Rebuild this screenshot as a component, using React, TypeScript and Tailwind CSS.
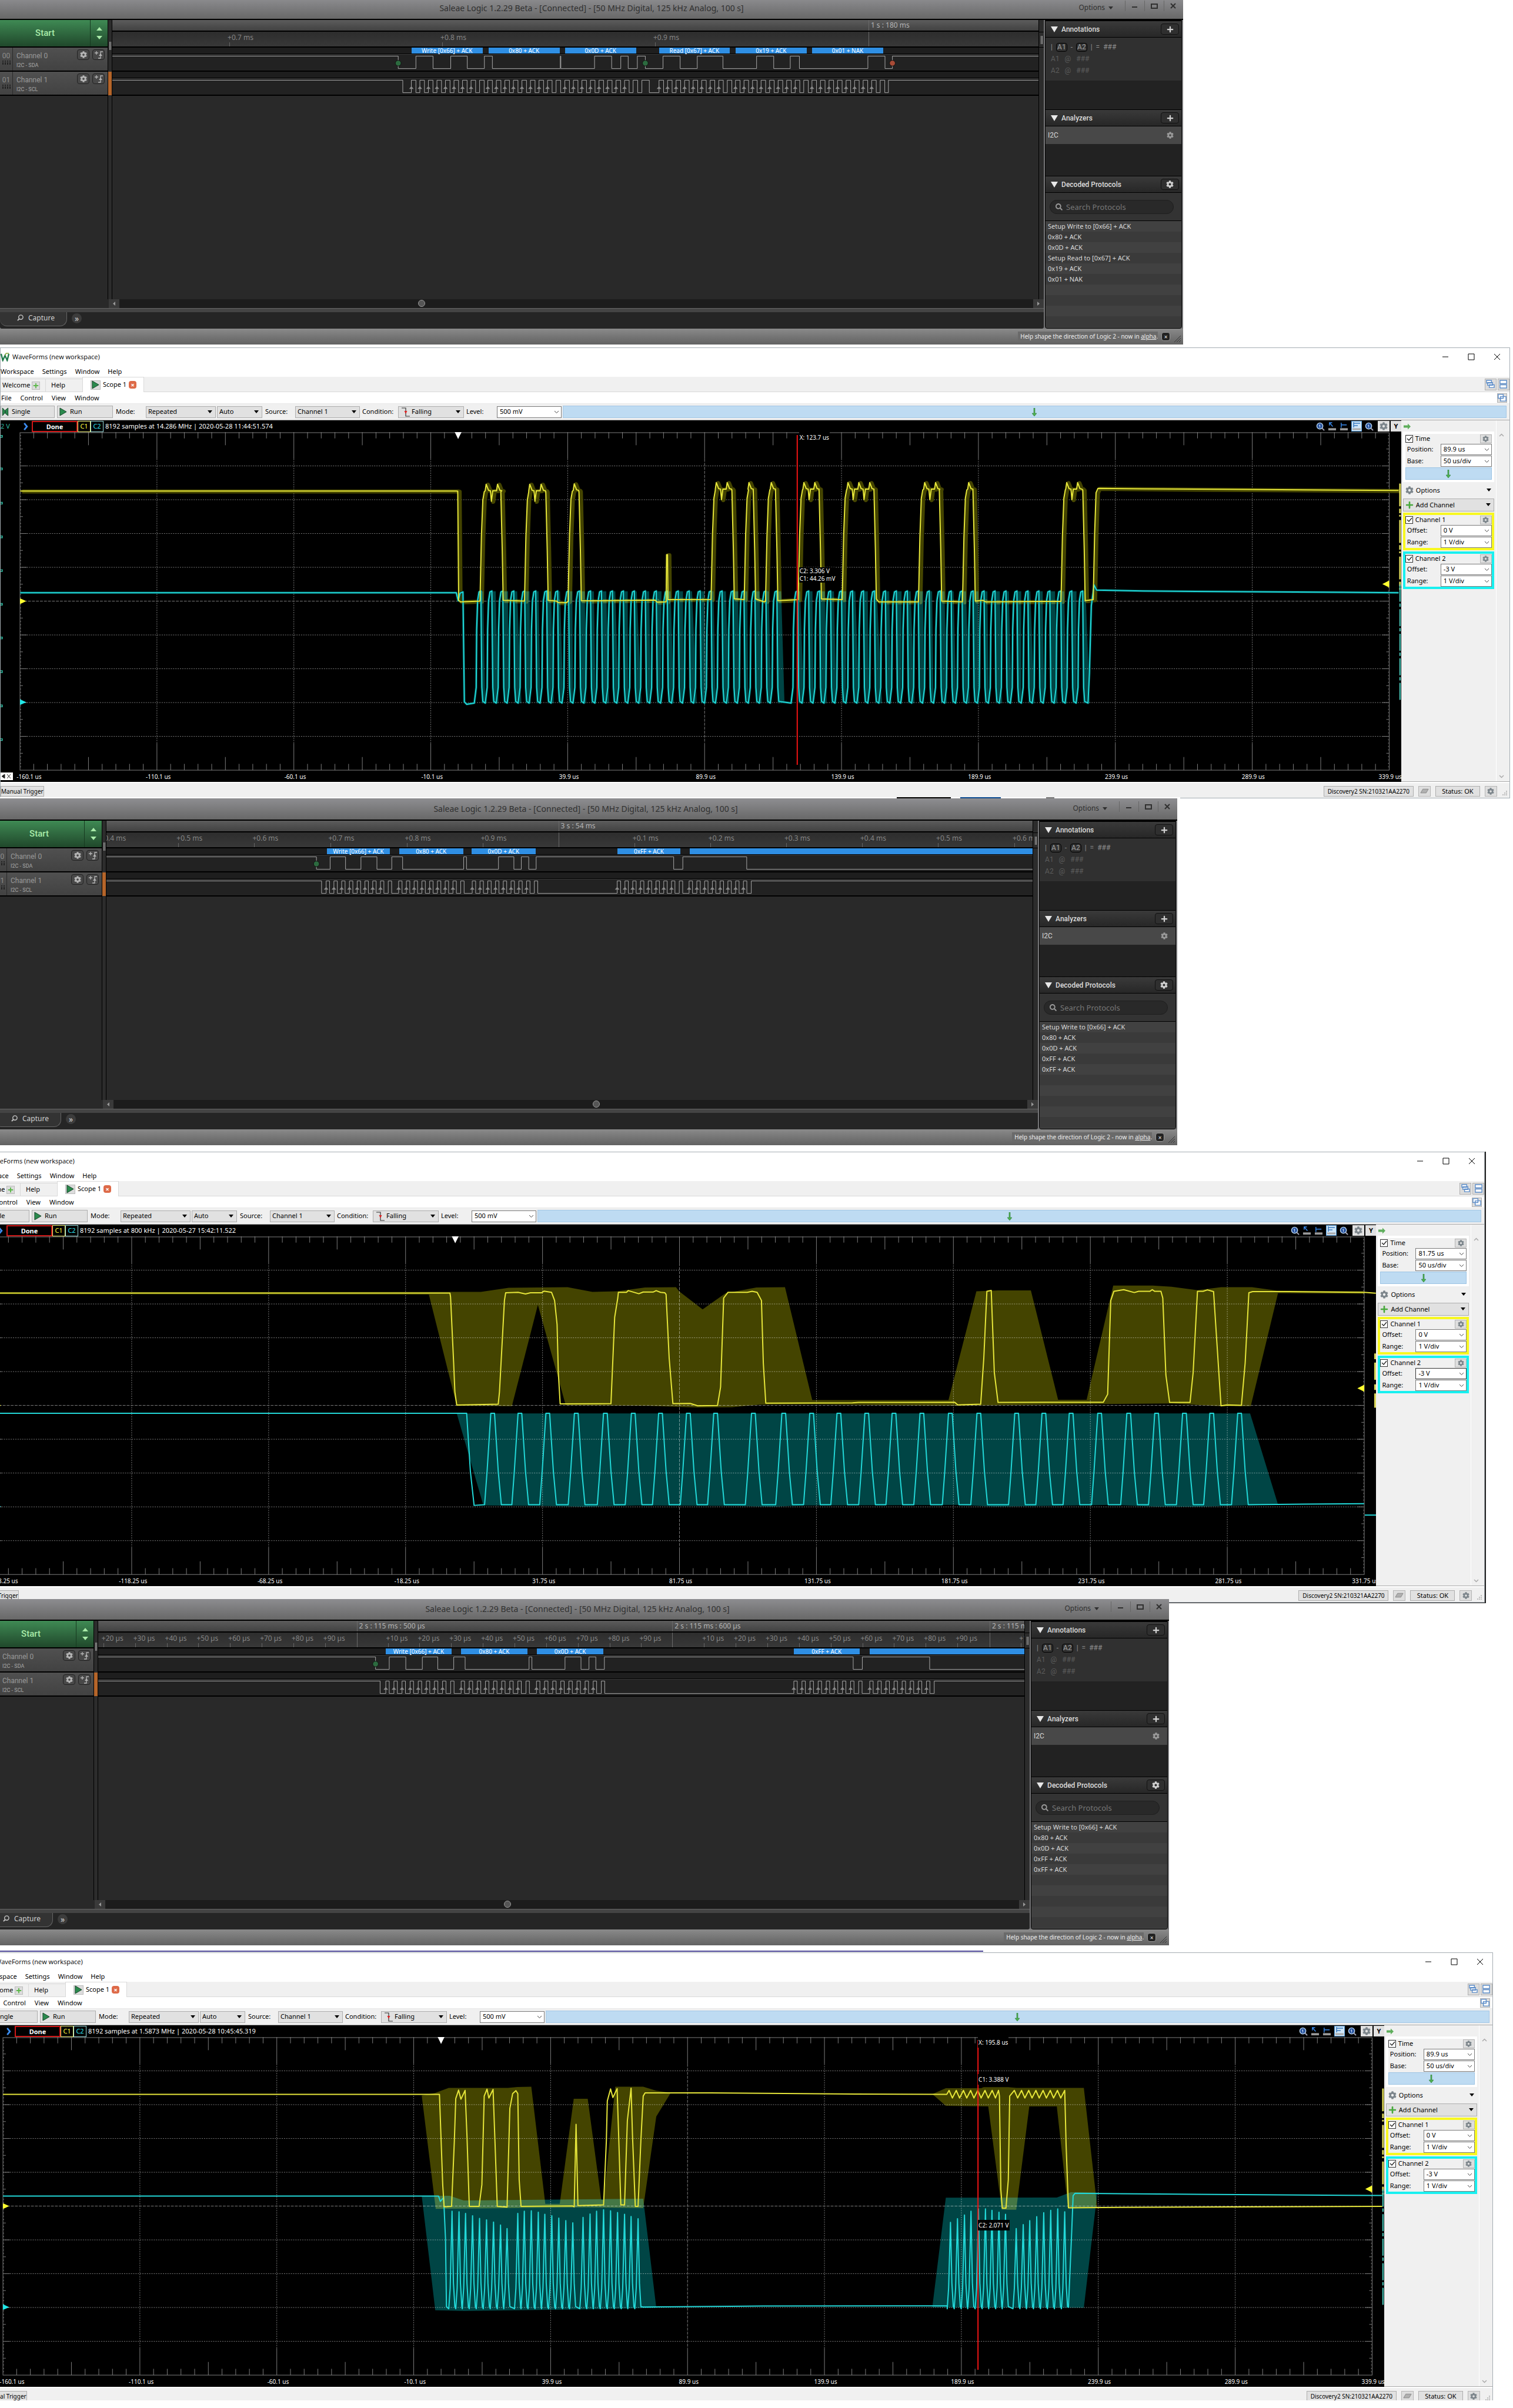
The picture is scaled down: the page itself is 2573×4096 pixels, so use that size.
import React from 'react';
import { FaCog, FaPlus, FaSearch } from 'react-icons/fa';

/* ---------- shared drawing helpers ---------- */

// converts an x position on the logic timeline into a percentage of its width
const LANE_X = 196;
const LANE_W = 1623;
const pct = (x: number) => `${((x - LANE_X) / LANE_W) * 100}%`;

// square wave that starts high and toggles on every edge
const squareWave = (edges: number[]) => {
  let high = true;
  let d = `M${LANE_X} 2.5`;
  edges.forEach((x) => {
    d += `H${x}`;
    high = !high;
    d += `V${high ? 2.5 : 24.5}`;
  });
  return `${d}H${LANE_X + LANE_W}`;
};

interface ByteClock {
  x: number;
  period: number;
  width: number;
}

const clockEdges = ({ x, period, width }: ByteClock) =>
  Array.from({ length: 9 }).flatMap((_, i) => [x + i * period, x + i * period + width]);

/* ---------- Logic analyzer ---------- */

interface Tick {
  x: number;
  label: string;
}

interface Frame {
  from: number;
  to: number;
  label: string;
}

interface LogicCapture {
  id: string;
  majors: Tick[];
  minors: Tick[];
  frames: Frame[];
  sda: number[];
  starts: number[];
  stop?: number;
  sclEdges: number[];
  bytes: ByteClock[];
  decoded: string[];
  scroll: number;
}

const byteRow = (xs: number[], period: number, width: number): ByteClock[] =>
  xs.map((x) => ({ x, period, width }));

const bytesA = byteRow([720, 854, 989, 1154, 1288, 1422], 14.95, 8);
const bytesB = byteRow([581, 708, 837, 1091, 1217], 13.6, 6);
const bytesC = byteRow([700, 832, 964, 1415, 1548], 14.2, 6);

const captures: LogicCapture[] = [
  {
    id: 'a',
    majors: [{ x: 1521, label: '1 s : 180 ms' }],
    minors: [
      { x: 401, label: '+0.7 ms' },
      { x: 774, label: '+0.8 ms' },
      { x: 1147, label: '+0.9 ms' },
    ],
    frames: [
      { from: 720, to: 845, label: 'Write [0x66] + ACK' },
      { from: 855, to: 980, label: '0x80 + ACK' },
      { from: 989, to: 1114, label: '0x0D + ACK' },
      { from: 1154, to: 1278, label: 'Read [0x67] + ACK' },
      { from: 1288, to: 1413, label: '0x19 + ACK' },
      { from: 1422, to: 1547, label: '0x01 + NAK' },
    ],
    sda: [697, 728, 758, 789, 818, 848, 862, 981, 982, 1041, 1071, 1087, 1100, 1116, 1130, 1161, 1191, 1221, 1266, 1325, 1355, 1384, 1400, 1520, 1550, 1563],
    starts: [697, 1130],
    stop: 1563,
    sclEdges: [705, ...bytesA.slice(0, 3).flatMap(clockEdges), 1124, 1137, ...bytesA.slice(3).flatMap(clockEdges), 1556],
    bytes: bytesA,
    decoded: ['Setup Write to [0x66] + ACK', '0x80 + ACK', '0x0D + ACK', 'Setup Read to [0x67] + ACK', '0x19 + ACK', '0x01 + NAK'],
    scroll: 733,
  },
  {
    id: 'b',
    majors: [{ x: 988, label: '3 s : 54 ms' }],
    minors: [
      { x: 188, label: '+0.4 ms' },
      { x: 322, label: '+0.5 ms' },
      { x: 455, label: '+0.6 ms' },
      { x: 588, label: '+0.7 ms' },
      { x: 722, label: '+0.8 ms' },
      { x: 855, label: '+0.9 ms' },
      { x: 1121, label: '+0.1 ms' },
      { x: 1254, label: '+0.2 ms' },
      { x: 1387, label: '+0.3 ms' },
      { x: 1520, label: '+0.4 ms' },
      { x: 1653, label: '+0.5 ms' },
      { x: 1787, label: '+0.6 ms' },
    ],
    frames: [
      { from: 582, to: 693, label: 'Write [0x66] + ACK' },
      { from: 709, to: 821, label: '0x80 + ACK' },
      { from: 836, to: 948, label: '0x0D + ACK' },
      { from: 1091, to: 1202, label: '0xFF + ACK' },
      { from: 1218, to: 1819, label: '' },
    ],
    sda: [564, 588, 615, 642, 670, 696, 715, 822, 827, 883, 910, 923, 936, 949, 1190, 1206, 1318],
    starts: [564],
    sclEdges: [573, ...bytesB.flatMap(clockEdges).slice(0, -2), 1326],
    bytes: bytesB,
    decoded: ['Setup Write to [0x66] + ACK', '0x80 + ACK', '0x0D + ACK', '0xFF + ACK', '0xFF + ACK'],
    scroll: 1053,
  },
  {
    id: 'c',
    majors: [
      { x: 649, label: '2 s : 115 ms : 500 µs' },
      { x: 1202, label: '2 s : 115 ms : 600 µs' },
      { x: 1758, label: '2 s : 115 ms : 700 µs' },
    ],
    minors: [
      ...[20, 30, 40, 50, 60, 70, 80, 90].map((t) => ({ x: 94 + t * 5.55, label: `+${t} µs` })),
      ...[10, 20, 30, 40, 50, 60, 70, 80, 90].map((t) => ({ x: 648 + t * 5.55, label: `+${t} µs` })),
      ...[10, 20, 30, 40, 50, 60, 70, 80, 90].map((t) => ({ x: 1202 + t * 5.55, label: `+${t} µs` })),
      { x: 1813, label: '+10 µs' },
    ],
    frames: [
      { from: 700, to: 815, label: 'Write [0x66] + ACK' },
      { from: 832, to: 948, label: '0x80 + ACK' },
      { from: 965, to: 1081, label: '0x0D + ACK' },
      { from: 1415, to: 1530, label: '0xFF + ACK' },
      { from: 1548, to: 1819, label: '' },
    ],
    sda: [682, 706, 735, 764, 791, 819, 839, 951, 956, 1014, 1042, 1056, 1068, 1083, 1519, 1535, 1653],
    starts: [682],
    sclEdges: [690, ...bytesC.flatMap(clockEdges).slice(0, -2), 1661],
    bytes: bytesC,
    decoded: ['Setup Write to [0x66] + ACK', '0x80 + ACK', '0x0D + ACK', '0xFF + ACK', '0xFF + ACK'],
    scroll: 910,
  },
];

const Lane: React.FC<{ edges: number[]; bytes?: ByteClock[]; starts?: number[]; stop?: number }> = ({
  edges,
  bytes = [],
  starts = [],
  stop,
}) => (
  <svg
    viewBox={`${LANE_X} 0 ${LANE_W} 28`}
    preserveAspectRatio="none"
    className="block h-[28px] w-full border-t border-[#3a3a3a] bg-[#222]"
  >
    <path d={squareWave(edges)} fill="none" stroke="#a9a9a9" strokeWidth="1" vectorEffect="non-scaling-stroke" />
    {bytes.flatMap((b) =>
      Array.from({ length: 8 }).map((_, i) => {
        const x = b.x + i * b.period;
        return <path key={x} d={`M${x - 4} 18L${x} 13L${x + 4} 18Z`} fill="#8a8a8a" />;
      }),
    )}
    {starts.map((x) => (
      <circle key={x} cx={x} cy="15" r="5" fill="#2c6a3f" stroke="#101010" />
    ))}
    {stop && <circle cx={stop} cy="15" r="5" fill="#a84b36" stroke="#101010" />}
  </svg>
);

const Glyph: React.FC = () => (
  <svg viewBox="0 0 18 16" className="h-[16px] w-[18px]">
    <path d="M2 5h6M5 2v6M8 14h4V3h4" fill="none" stroke="#b5b5b5" strokeWidth="1.3" />
    <path d="M9 10l3-4 3 4z" fill="#b5b5b5" />
  </svg>
);

const ChannelHead: React.FC<{ num: string; name: string; role: string }> = ({ num, name, role }) => (
  <div className="flex h-[41px] border-b-2 border-black bg-linear-to-b from-[#505050] to-[#424242] font-[Roboto,sans-serif]">
    <div className="w-[22px] border-r border-[#2a2a2a] pt-[6px] text-center text-xs leading-4 text-[#8e8e8e]">
      {num}
      <svg viewBox="0 0 16 7" className="mx-auto h-[7px] w-[16px]">
        <path d="M1 1h14M1 4h14M1 6h14" stroke="#222" strokeWidth="2" strokeDasharray="2 2" />
      </svg>
    </div>
    <div className="flex-1 pt-[6px] pl-[6px]">
      <div className="text-xs leading-4 text-[#9a9a9a]">{name}</div>
      <div className="text-[9px] leading-4 text-[#a8a8a8]">{role}</div>
    </div>
    <button aria-label={`${name} settings`} className="mt-[3px] mr-[5px] flex h-[18px] w-[21px] items-center justify-center rounded-sm border border-[#222] bg-[#484848]">
      <FaCog className="size-[12px] text-[#b5b5b5]" />
    </button>
    <button aria-label={`${name} trigger`} className="mt-[3px] mr-[5px] flex h-[18px] w-[21px] items-center justify-center rounded-sm border border-[#222] bg-[#484848]">
      <Glyph />
    </button>
  </div>
);

const PanelHead: React.FC<{ title: string; icon: React.ReactNode }> = ({ title, icon }) => (
  <div className="flex h-[29px] items-center border-y border-black bg-linear-to-b from-[#3a3a3a] to-[#272727] pr-[4px] pl-[9px]">
    <svg viewBox="0 0 12 10" className="mr-[6px] h-[10px] w-[12px]">
      <path d="M0 0h12L6 10z" fill="#e8e8e8" />
    </svg>
    <h2 className="flex-1 font-[Roboto,sans-serif] text-xs font-medium text-[#dcdcdc]">{title}</h2>
    <button aria-label={title} className="flex h-[19px] w-[31px] items-center justify-center rounded-sm border border-[#111] bg-[#2f2f2f] text-[#d0d0d0]">
      {icon}
    </button>
  </div>
);

const LogicWindow: React.FC<{ cap: LogicCapture }> = ({ cap }) => (
  <div className="flex h-[590px] flex-col bg-[#767678] font-['Noto_Sans',sans-serif]">
    <header className="relative flex h-[38px] items-start justify-end border-b-2 border-black bg-linear-to-b from-[#8e8e91] to-[#686868] pt-[5px] text-[#303030]">
      <h1 className="absolute inset-x-0 top-[8px] text-center text-[14px] leading-5">
        Saleae Logic 1.2.29 Beta - [Connected] - [50 MHz Digital, 125 kHz Analog, 100 s]
      </h1>
      <button className="relative mt-[4px] mr-5 flex items-center gap-[6px] text-[12px] leading-4">
        Options
        <svg viewBox="0 0 8 5" className="h-[5px] w-[8px]"><path d="M0 0h8L4 5z" fill="currentColor" /></svg>
      </button>
      {['M2 8h9', 'M2 3h10v7H2z', 'M2 2l8 8M10 2l-8 8'].map((d) => (
        <button key={d} aria-label="window control" className="flex h-[18px] w-[33px] items-center justify-center border-l border-[#666]">
          <svg viewBox="0 0 14 12" className="h-[12px] w-[14px]">
            <path d={d} fill="none" stroke="#303030" strokeWidth="2" />
          </svg>
        </button>
      ))}
    </header>

    <div className="flex h-[525px]">
      <div className="flex min-w-0 flex-1 flex-col rounded-b bg-[#292929]">
        <div className="flex flex-1">
          <div className="w-[183px]">
            <div className="flex h-[47px] border-b-2 border-black bg-linear-to-b from-[#3f8a54] to-[#20482b] text-[#a9eba9]">
              <button className="flex-1 rounded-l border-r border-[#173a20] font-[Roboto,sans-serif] text-[15px] font-medium">Start</button>
              <button aria-label="duration" className="flex w-[29px] flex-col items-center justify-center gap-[9px]">
                <svg viewBox="0 0 10 6" className="h-[6px] w-[10px]"><path d="M0 6h10L5 0z" fill="currentColor" /></svg>
                <svg viewBox="0 0 10 6" className="h-[6px] w-[10px]"><path d="M0 0h10L5 6z" fill="currentColor" /></svg>
              </button>
            </div>
            <ChannelHead num="00" name="Channel 0" role="I2C - SDA" />
            <ChannelHead num="01" name="Channel 1" role="I2C - SCL" />
          </div>
          <div className="flex w-[8px] flex-col border-x border-black bg-[#2c2c2c]">
            <div className="flex h-[88px] items-center justify-center gap-px">
              <i className="h-[14px] w-px bg-[#aaa]" />
              <i className="h-[14px] w-px bg-[#aaa]" />
            </div>
            <div className="h-[40px] bg-[#b5652a]" />
          </div>
          <div className="min-w-0 flex-1 overflow-hidden">
            <div className="relative h-[20px] overflow-hidden border-b-2 border-black bg-linear-to-b from-[#5c5c5c] to-[#424242] text-[12px] leading-[17px] whitespace-nowrap text-[#b5b5b5]">
              {cap.majors.map((t) => (
                <span key={t.label} className="absolute top-0 h-full border-l border-[#6a6a6a] pl-[3px]" style={{ left: pct(t.x) }}>{t.label}</span>
              ))}
            </div>
            <div className="relative h-[27px] overflow-hidden border-b-2 border-black bg-linear-to-b from-[#2d2d2d] to-[#383838] text-[12px] leading-4 whitespace-nowrap text-[#858585]">
              {cap.majors.map((t) => (
                <i key={t.label} className="absolute top-0 h-full w-px bg-[#6a6a6a]" style={{ left: pct(t.x) }} />
              ))}
              {cap.minors.map((t) => (
                <span key={t.x} className="absolute top-[2px]" style={{ left: pct(t.x - 3) }}>
                  {t.label}
                  <i className="ml-[3px] block h-[8px] w-px bg-[#666]" />
                </span>
              ))}
            </div>
            <div className="relative h-[11px] border-b border-black bg-[#1e1e1e]">
              {cap.frames.map((f) => (
                <span
                  key={f.from}
                  className="absolute top-0 h-[10px] bg-[#2f8fe4] text-center text-[10px] leading-[10px] whitespace-nowrap text-white"
                  style={{ left: pct(f.from), width: `${((f.to - f.from) / LANE_W) * 100}%` }}
                >
                  {f.label}
                </span>
              ))}
            </div>
            <Lane edges={cap.sda} starts={cap.starts} stop={cap.stop} />
            <div className="h-[13px] border-y border-t-2 border-black bg-[#1e1e1e]" />
            <Lane edges={cap.sclEdges} bytes={cap.bytes} />
            <div className="h-[2px] bg-black" />
          </div>
          <div className="w-[9px] border-l border-black bg-[#2c2c2c]">
            <div className="mt-[20px] flex h-[27px] items-center justify-center gap-px border-y border-black">
              <i className="h-[14px] w-px bg-[#aaa]" />
              <i className="h-[14px] w-px bg-[#aaa]" />
            </div>
          </div>
        </div>
        <div className="ml-[185px] flex h-[15px] items-center bg-[#1c1c1c] text-[#999]">
          <svg viewBox="0 0 18 15" className="h-[15px] w-[18px] bg-[#3a3a3a]"><path d="M11 4v7L7 7.5z" fill="currentColor" /></svg>
          <div className="relative flex-1">
            <i className="absolute -top-[7px] size-[12px] rounded-full border border-[#999] bg-[#555]" style={{ left: pct(cap.scroll - 6) }} />
          </div>
          <svg viewBox="0 0 18 15" className="h-[15px] w-[18px] bg-[#3a3a3a]"><path d="M7 4v7l4-3.5z" fill="currentColor" /></svg>
        </div>
        <div className="h-[7px] border-t border-[#666] bg-[#444]" />
        <div className="flex h-[28px] items-start rounded-b bg-[#252525] text-xs text-[#d0d0d0]">
          <button className="flex h-[24px] w-[114px] items-center gap-[8px] rounded-b-xl border-r border-b border-[#666] bg-[#333] pb-[4px] pl-[29px]">
            <svg viewBox="0 0 12 12" className="size-[11px]">
              <circle cx="7" cy="5" r="4" fill="none" stroke="#ccc" strokeWidth="1.5" />
              <path d="M4 8L1 11" stroke="#ccc" strokeWidth="2" />
            </svg>
            Capture
          </button>
          <button aria-label="more tabs" className="mt-[2px] ml-[8px] size-[17px] rounded-full bg-[#3c3c3c] text-[14px] leading-[15px]">»</button>
        </div>
      </div>

      <aside className="mr-[2px] ml-[2px] flex w-[233px] flex-col overflow-hidden rounded-b border border-black bg-[#222]">
        <PanelHead title="Annotations" icon={<FaPlus className="size-[12px]" />} />
        <div className="h-[73px] bg-[#303030] pt-[6px] pl-[9px] font-[Roboto,sans-serif] text-xs leading-[20px] whitespace-pre text-[#5c5c5c]">
          <div className="flex items-center text-[#8d8d8d]">
            <span>|&nbsp; </span>
            <b className="rounded-sm border border-black px-px text-[12px] leading-[13px] font-medium">A1</b>
            <span>&nbsp; -&nbsp; </span>
            <b className="rounded-sm border border-black px-px text-[12px] leading-[13px] font-medium">A2</b>
            <span>&nbsp; |&nbsp; =&nbsp; ###</span>
          </div>
          <div>A1&nbsp;&nbsp; @&nbsp;&nbsp; ###</div>
          <div>A2&nbsp;&nbsp; @&nbsp;&nbsp; ###</div>
        </div>
        <div className="h-[49px]" />
        <PanelHead title="Analyzers" icon={<FaPlus className="size-[12px]" />} />
        <div className="flex h-[30px] items-center justify-between bg-[#484848] pr-[13px] pl-[4px] font-[Roboto,sans-serif] text-xs text-[#d8d8d8]">
          I2C
          <FaCog className="size-[12px] text-[#999]" />
        </div>
        <div className="h-[54px]" />
        <PanelHead title="Decoded Protocols" icon={<FaCog className="size-[13px]" />} />
        <div className="flex h-[48px] items-center border-b border-black bg-[#333] px-[7px]">
          <label className="flex h-[24px] w-[211px] items-center gap-[6px] rounded-full border border-[#1e1e1e] bg-[#292929] pl-[9px]">
            <FaSearch className="size-[12px] text-[#999]" />
            <input placeholder="Search Protocols" aria-label="Search Protocols" className="w-[160px] bg-transparent text-[13px] leading-5 text-[#888] placeholder:text-[#777]" />
          </label>
        </div>
        <ul className="flex-1 bg-[#3e3e3e] text-[11px] leading-[18px] text-[#dadada]">
          {[...cap.decoded, '', '', '', '', '', ''].slice(0, 10).map((row, i) => (
            <li key={i} className="h-[18px] pl-[4px] odd:bg-[#414141] even:bg-[#3a3a3a]">{row}</li>
          ))}
        </ul>
      </aside>
    </div>

    <footer className="flex h-[27px] items-center justify-end gap-[6px] bg-linear-to-b from-[#8a8a8a] to-[#626262] pr-[4px] text-[10px] text-[#eee]">
      <span className="bg-[#6a6a6a] pl-[4px] leading-[17px]">
        Help shape the direction of Logic 2 - now in <a href="#alpha" className="underline">alpha</a>.
      </span>
      <button aria-label="dismiss" className="size-[15px] rounded-sm border border-[#999] bg-[#222] text-[10px] leading-[12px]">×</button>
      <svg viewBox="0 0 12 12" className="mt-[6px] size-[12px]"><path d="M1 12L12 1M5 12l7-7M9 12l3-3" stroke="#333" /></svg>
    </footer>
  </div>
);

/* ---------- Oscilloscope ---------- */

type Point = [number, number];
const line = (pts: Point[]) => pts.map(([x, y]) => `${x},${y}`).join(' ');

interface ScopeShot {
  id: string;
  info: string;
  firstTime: number;
  decimals: number;
  position: string;
  focus?: boolean;
  trigger: number;
  transform: string;
  traces: React.ReactNode;
  cursor?: React.ReactNode;
}

const YELLOW = '#e6e63a';
const CYAN = '#22d8d8';
const DIM_YELLOW = '#444400';
const DIM_CYAN = '#004545';

const Trace: React.FC<{ pts: Point[]; color: string; width?: number }> = ({ pts, color, width = 2 }) => (
  <polyline points={line(pts)} fill="none" stroke={color} strokeWidth={width} strokeLinejoin="round" vectorEffect="non-scaling-stroke" />
);

const Envelope: React.FC<{ pts: Point[]; color: string }> = ({ pts, color }) => (
  <polygon points={line(pts)} fill={color} className="mix-blend-screen" />
);

// one data pulse with a bump above every clock edge
const dataPulse = (x0: number, x1: number, peaks: number[], hi: number, lo: number): Point[] => {
  const pts: Point[] = [[x0, lo], [x0 + 3, lo - 270], [x0 + 6, hi + 40], [x0 + 9, hi + 6]];
  peaks.forEach((p, i) => {
    pts.push([p - 2, hi + 2], [p, hi - 25], [p + 5, hi], [p + 9, hi + 2]);
    if (i < peaks.length - 1) pts.push([p + 11, hi + 46], [p + 14, hi + 2]);
  });
  pts.push([x1 - 5, hi + 6], [x1 - 2, hi + 250], [x1, lo - 3]);
  return pts;
};

const shotOneSda: Point[] = [
  [-803, 283], [118, 283], [121, 284], [123, 738], [127, 744],
  ...dataPulse(168, 217, [181, 205], 280, 741),
  ...dataPulse(262, 312, [273, 297], 280, 741),
  [330, 741], [333, 747], [350, 748],
  ...dataPulse(354, 382, [367], 278, 742),
  [400, 740], [538, 737], [542, 745], [561, 744], [562, 548], [564, 548], [565, 735],
  ...dataPulse(656, 705, [667, 690], 273, 734),
  ...dataPulse(726, 750, [736], 273, 735),
  [768, 744],
  ...dataPulse(771, 797, [783], 273, 742),
  ...dataPulse(840, 889, [852, 875], 273, 735),
  ...dataPulse(933, 1005, [945, 968, 991], 273, 735),
  [1010, 744],
  ...dataPulse(1094, 1143, [1107, 1130], 273, 744),
  ...dataPulse(1187, 1214, [1200], 273, 744),
  [1230, 738], [1236, 744],
  ...dataPulse(1395, 1446, [1407, 1430], 273, 742),
  [1463, 735], [1466, 460], [1469, 290], [1473, 272], [1568, 274], [2108, 281],
];

const clockPeaks = [
  ...Array.from({ length: 28 }, (_, i) => 166 + i * 23.15),
  ...Array.from({ length: 27 }, (_, i) => 835 + i * 23.15),
];

const shotOneScl: Point[] = [
  [-803, 706], [118, 706], [122, 740], [126, 708], [132, 703], [135, 1160], [140, 1170],
  ...clockPeaks.flatMap((x): Point[] => [
    [x - 10, 1165], [x - 6, 1100], [x - 5, 860], [x - 3, 740], [x, 703], [x + 4, 699], [x + 6, 1100], [x + 8, 1158],
  ]),
  [1452, 1165], [1455, 1040], [1459, 760], [1465, 674], [1470, 695], [1568, 699], [2108, 706],
];

const shotTwoSda: Point[] = [
  [-700, 269], [80, 269], [81, 285], [86, 560], [88, 680], [91, 735], [158, 731], [160, 680], [168, 300], [170, 268], [190, 266], [202, 273],
  [210, 268], [228, 268], [232, 261], [244, 266], [249, 300], [253, 400], [255, 600], [258, 730], [340, 729], [346, 370], [351, 290],
  [352, 266], [365, 266], [368, 259], [385, 272], [392, 265], [408, 265], [413, 259], [420, 266], [427, 268], [429, 275], [434, 540],
  [440, 729], [468, 728], [480, 738], [512, 737], [517, 660], [522, 290], [529, 266], [560, 266], [568, 262], [576, 266], [583, 300],
  [586, 560], [590, 727], [730, 726], [740, 724], [895, 723], [900, 734], [937, 731], [942, 540], [947, 262], [954, 258], [959, 600],
  [965, 724], [1135, 723], [1142, 690], [1147, 300], [1152, 262], [1168, 255], [1185, 267], [1192, 262], [1210, 262], [1214, 255],
  [1218, 262], [1228, 262], [1231, 290], [1236, 610], [1242, 724], [1275, 724], [1280, 600], [1287, 262], [1296, 262], [1303, 256],
  [1313, 263], [1320, 540], [1325, 738], [1335, 734], [1358, 736], [1364, 560], [1370, 268], [1376, 263], [1435, 263], [1556, 266], [1575, 270],
];

const shotTwoSdaBand: Point[] = [
  [-700, 266], [130, 264], [175, 247], [270, 245], [310, 264], [350, 262], [395, 246], [445, 245], [450, 262], [488, 337], [525, 270],
  [575, 246], [621, 245], [665, 714], [885, 714], [930, 262], [965, 258], [1018, 258], [1062, 713], [1108, 713], [1151, 238],
  [1215, 238], [1245, 243], [1287, 257], [1325, 245], [1375, 245], [1415, 259], [1556, 262], [1556, 272], [1417, 270], [1373, 740],
  [1325, 740], [1245, 728], [1100, 731], [895, 738], [670, 732], [580, 733], [535, 744], [480, 745], [400, 738], [267, 736],
  [222, 318], [180, 740], [91, 738], [46, 275], [-700, 273],
];

const shotTwoPeaks = [
  149, 193, 238, 284, 331, 376, 420, 465, 509, 570, 619, 664, 708, 753, 797, 842, 888, 934, 995, 1039, 1083, 1129, 1176, 1221, 1266, 1310, 1355,
];

const shotTwoScl: Point[] = [
  [-700, 769], [107, 769], [113, 1010], [119, 1152],
  ...shotTwoPeaks.flatMap((x): Point[] => [
    [x - 13, 1149], [x - 9, 1010], [x - 3, 769], [x + 3, 769], [x + 9, 1010], [x + 14, 1149],
  ]),
  [1460, 1147], [1556, 1145],
];

const zigzag = (from: number, count: number): Point[] =>
  Array.from({ length: count }).flatMap((_, i): Point[] => [[from + i * 15.4, 277], [from + 7 + i * 15.4, 308]]);

const shotThreeSda: Point[] = [
  [-828, 293], [108, 293], [115, 660], [118, 750], [134, 748], [140, 480], [143, 310], [149, 276], [154, 313], [163, 277], [167, 460],
  [172, 748], [193, 748], [199, 660], [204, 300], [210, 272], [214, 308], [223, 273], [227, 480], [232, 748], [253, 751], [259, 350],
  [265, 290], [272, 278], [276, 290], [279, 640], [283, 748], [393, 746], [397, 750], [401, 415], [405, 745], [460, 742], [466, 480],
  [468, 320], [475, 271], [480, 306], [489, 270], [492, 440], [497, 742], [505, 742], [511, 400], [519, 268], [522, 460], [528, 748],
  [534, 748], [540, 480], [545, 300], [549, 287], [690, 287], [810, 289], [1000, 292], [1196, 293],
  ...zigzag(1201, 7), [1307, 277], [1309, 300], [1312, 680], [1315, 755], [1323, 755], [1328, 640], [1331, 300],
  ...zigzag(1341, 7), [1449, 277], [1452, 500], [1457, 754], [1568, 752], [2130, 748],
];

const spike = ([x, y]: Point): Point[] => [[x - 7, 1164], [x - 4, 1080], [x, y], [x + 3, 1060], [x + 6, 1155]];

const shotThreeScl: Point[] = [
  [-828, 706], [106, 706], [110, 728], [117, 712], [121, 880], [123, 1155],
  ...([
    [135, 768], [150, 770], [164, 777], [179, 786], [194, 797], [209, 803], [224, 812], [239, 824], [253, 838], [276, 777], [290, 768],
    [305, 766], [320, 772], [334, 780], [349, 786], [364, 796], [379, 806], [394, 815], [416, 793], [431, 779], [445, 768], [460, 762],
    [475, 766], [490, 773], [505, 780], [519, 789], [534, 798],
  ] as Point[]).flatMap(spike),
  [545, 1157], [800, 1153], [1197, 1152],
  ...([
    [1204, 813], [1219, 798], [1234, 783], [1248, 768], [1264, 758], [1279, 758], [1293, 764], [1308, 772], [1322, 780], [1345, 838],
    [1360, 822], [1374, 806], [1389, 790], [1404, 774], [1419, 764], [1434, 758], [1449, 770],
  ] as Point[]).flatMap(spike),
  [1457, 1158], [1464, 850], [1467, 705], [1471, 695], [1568, 697], [2130, 704],
];

const shots: ScopeShot[] = [
  {
    id: 'one',
    info: '8192 samples at 14.286 MHz | 2020-05-28 11:44:51.574',
    firstTime: -160.1,
    decimals: 1,
    position: '89.9 us',
    trigger: 801,
    transform: 'translate(700 -16) scale(.829 .421)',
    traces: (
      <>
        <g transform="translate(4 2)">
          <Trace pts={shotOneSda} color={DIM_YELLOW} width={7} />
        </g>
        {clockPeaks.map((x, i) => (
          <Envelope
            key={x}
            color={DIM_CYAN}
            pts={[[x + 4, 700], [x + 9 + ((i * 3) % 7), 700], [x + 13 + ((i * 5) % 8), 1166], [x + 6, 1166]]}
          />
        ))}
        <Trace pts={shotOneScl} color={DIM_CYAN} width={4} />
        <Trace pts={shotOneScl} color={CYAN} />
        <Trace pts={shotOneSda} color={YELLOW} />
        <path d="M838 50V1422" stroke="#f01414" strokeWidth="2" vectorEffect="non-scaling-stroke" />
      </>
    ),
    cursor: (
      <>
        <span className="absolute top-0 left-[57%] bg-black px-px leading-[18px]">X: 123.7 us</span>
        <span className="absolute top-[40%] left-[57%] bg-black px-px leading-[13px]">C2: 3.306 V<br />C1: 44.26 mV</span>
      </>
    ),
  },
  {
    id: 'two',
    info: '8192 samples at 800 kHz | 2020-05-27 15:42:11.522',
    firstTime: -168.25,
    decimals: 2,
    position: '81.75 us',
    focus: true,
    trigger: 840,
    transform: 'translate(744 -14) scale(1.084 .421)',
    traces: (
      <>
        <Envelope pts={shotTwoSdaBand} color={DIM_YELLOW} />
        <Envelope
          color={DIM_CYAN}
          pts={[[91, 770], [1372, 770], [1417, 1148], [1290, 1158], [1220, 1157], [1150, 1150], [1040, 1154], [960, 1157], [900, 1150], [650, 1152], [600, 1158], [540, 1154], [380, 1152], [300, 1158], [230, 1154], [134, 1152]]}
        />
        <Trace pts={shotTwoScl} color={CYAN} />
        <Trace pts={shotTwoSda} color={YELLOW} />
      </>
    ),
  },
  {
    id: 'three',
    info: '8192 samples at 1.5873 MHz | 2020-05-28 10:45:45.319',
    firstTime: -160.1,
    decimals: 1,
    position: '89.9 us',
    trigger: 801,
    transform: 'translate(710 -26) scale(.8163 .4311)',
    traces: (
      <>
        <Envelope
          color={DIM_YELLOW}
          pts={[[70, 298], [99, 287], [128, 267], [255, 267], [275, 263], [305, 262], [335, 738], [366, 738], [396, 311], [426, 311], [455, 722], [460, 722], [485, 262], [545, 262], [573, 278], [603, 286], [603, 290], [573, 383], [545, 755], [420, 752], [100, 758]]}
        />
        <Envelope
          color={DIM_YELLOW}
          pts={[[1165, 292], [1194, 268], [1270, 268], [1275, 264], [1328, 264], [1345, 267], [1490, 267], [1519, 755], [1456, 755], [1432, 342], [1373, 342], [1345, 762], [1314, 762], [1285, 342], [1194, 340]]}
        />
        <Envelope color={DIM_CYAN} pts={[[70, 705], [130, 705], [160, 724], [545, 717], [573, 1160], [440, 1166], [160, 1173], [99, 1170]]} />
        <Envelope color={DIM_CYAN} pts={[[1194, 713], [1432, 712], [1462, 691], [1519, 692], [1490, 1160], [1165, 1158]]} />
        <Trace pts={shotThreeScl} color={CYAN} />
        <Trace pts={shotThreeSda} color={YELLOW} />
        <path d="M1263 72V1412" stroke="#f01414" strokeWidth="2" vectorEffect="non-scaling-stroke" />
      </>
    ),
    cursor: (
      <>
        <span className="absolute top-0 left-[71%] bg-black px-px leading-[18px]">X: 195.8 us</span>
        <span className="absolute top-[11%] left-[71%] bg-black px-px leading-[18px]">C1: 3.388 V</span>
        <span className="absolute top-[54%] left-[71%] bg-black px-px leading-[18px]">C2: 2.071 V</span>
      </>
    ),
  },
];

// plot frame: 10 x 10 divisions
const GX = 34;
const GW = 2397;
const GH = 592;
const tickLen = (i: number, big: number, half: number, small: number) => (i % 10 === 0 ? big : i % 5 === 0 ? half : small);

const Graticule: React.FC = () => {
  const ticks = Array.from({ length: 99 }, (_, i) => i + 1);
  const tops = ticks
    .map((i) => {
      const x = GX + (i * GW) / 100;
      const len = tickLen(i, 47, 23, 11);
      return `M${x} 0V${len}M${x} ${GH}V${GH - len}`;
    })
    .join('');
  const sides = ticks
    .map((i) => {
      const y = (i * GH) / 100;
      const len = tickLen(i, 12, 5, 2);
      return `M${GX} ${y}h${len}M${GX + GW} ${y}h-${len}`;
    })
    .join('');
  return (
    <g fill="none" stroke="#808080">
      <rect x={GX} y="1" width={GW} height={GH - 1} />
      <path d={tops} />
      <path d={sides} />
      {[1, 2, 3, 4, 5, 6, 7, 8, 9].map((i) => (
        <g key={i} strokeDasharray={i === 5 ? '5 2' : '2 2'}>
          <path d={`M${GX} ${(i * GH) / 10}h${GW}`} />
          <path d={`M${GX + (i * GW) / 10} 47V${GH - 47}`} />
        </g>
      ))}
    </g>
  );
};

const Caret: React.FC = () => (
  <svg viewBox="0 0 8 5" className="pointer-events-none absolute top-1/2 right-[5px] -mt-[3px] h-[5px] w-[8px]"><path d="M0 0h8L4 5z" fill="#000" /></svg>
);

const Chevron: React.FC = () => (
  <svg viewBox="0 0 9 6" className="pointer-events-none absolute top-1/2 right-[4px] -mt-[3px] h-[6px] w-[9px]"><path d="M1 1l3.500 3.500L8 1" fill="none" stroke="#444" /></svg>
);

const GreyDrop: React.FC<{ label: string; value: string; width: string; icon?: React.ReactNode }> = ({ label, value, width, icon }) => (
  <span className={`relative h-[20px] border border-[#adadad] bg-[#e1e1e1] ${width}`}>
    {icon}
    <select aria-label={label} className={`h-full w-full appearance-none ${icon ? 'pl-[22px]' : 'pl-[3px]'}`}>
      <option>{value}</option>
    </select>
    <Caret />
  </span>
);

const Field: React.FC<{ label: string; value: string; focus?: boolean }> = ({ label, value, focus }) => (
  <label className="flex h-[19px] items-center justify-between pl-[3px]">
    {label}
    <span className="relative">
      <select className={`block h-[19px] w-[87px] appearance-none border bg-white pl-[4px] ${focus ? 'border-[#333]' : 'border-[#7a7a7a]'}`}>
        <option>{value}</option>
      </select>
      <Chevron />
    </span>
  </label>
);

const GearButton: React.FC<{ label: string }> = ({ label }) => (
  <button aria-label={label} className="flex h-[15px] w-[20px] items-center justify-center border border-[#b5b5b5] bg-[#dedede]">
    <FaCog className="size-[11px] text-[#7d868c]" />
  </button>
);

const Group: React.FC<{ title: string; frame: string; children: React.ReactNode }> = ({ title, frame, children }) => (
  <fieldset className={`flex flex-col gap-px border-4 bg-[#f0f0f0] ${frame}`}>
    <div className="flex h-[16px] items-center justify-between">
      <label className="flex items-center gap-[4px]">
        <span className="relative">
          <input type="checkbox" defaultChecked className="block size-[13px] appearance-none border border-[#333] bg-white" />
          <svg viewBox="0 0 13 13" className="pointer-events-none absolute top-0 left-0 size-[13px]"><path d="M3 6l3 3 5-6" fill="none" stroke="#222" strokeWidth="1.300" /></svg>
        </span>
        {title}
      </label>
      <GearButton label={`${title} settings`} />
    </div>
    {children}
  </fieldset>
);

const Play: React.FC = () => (
  <svg viewBox="0 0 14 16" className="h-[15px] w-[13px]"><path d="M1 1l12 7-12 7z" fill="#2b8a4e" stroke="#123f24" /></svg>
);

const GreenArrow: React.FC = () => (
  <svg viewBox="0 0 8 14" className="h-[14px] w-[8px]"><path d="M3 0h2v9h3l-4 5-4-5h3z" fill="#4caf50" stroke="#2c7a38" strokeWidth=".6" /></svg>
);

const WindowsIcon: React.FC<{ d: string; size: string }> = ({ d, size }) => (
  <button aria-label="arrange windows" className={`flex items-center justify-center border border-[#b0b0b0] bg-[#dcdcdc] ${size}`}>
    <svg viewBox="0 0 16 16" className="size-[15px]"><path d={d} fill="#fff" stroke="#5b8cc8" strokeWidth="1.500" /></svg>
  </button>
);

const Magnifier: React.FC = () => (
  <svg viewBox="0 0 16 16" className="size-[15px]">
    <circle cx="7" cy="7" r="5.500" fill="#2a55a0" stroke="#b9d4ee" strokeWidth="1.500" />
    <path d="M11 11l4 4" stroke="#aab" strokeWidth="2" />
    <path d="M5.500 6L7 5v5" stroke="#dfeeff" fill="none" />
  </svg>
);

const ScopeWindow: React.FC<{ shot: ScopeShot }> = ({ shot }) => (
  <div className="h-[767px] border border-[#a5adb3] bg-[#f0f0f0] font-['Noto_Sans',sans-serif] text-[11px] text-black">
    <header className="flex h-[30px] items-center bg-white">
      <svg viewBox="0 0 16 16" className="h-[15px] w-[15px]">
        <path d="M1 2l3 12 4-9 4 9 3-12" fill="none" stroke="#1f7a4a" strokeWidth="2.500" />
        <path d="M8 5l2-4h5" fill="none" stroke="#8aa83a" strokeWidth="1.500" />
      </svg>
      <h1 className="ml-[5px] flex-1 font-['Open_Sans',sans-serif]">WaveForms (new workspace)</h1>
      <div className="flex gap-[32px] pr-[15px]">
        {['M1 6h10', 'M1 1h10v10H1z', 'M1 1l10 10M11 1L1 11'].map((d) => (
          <button key={d} aria-label="window control">
            <svg viewBox="0 0 12 12" className="size-[12px]"><path d={d} fill="none" stroke="#000" /></svg>
          </button>
        ))}
      </div>
    </header>
    <nav className="flex h-[19px] items-center gap-[14px] bg-white leading-4">
      {['Workspace', 'Settings', 'Window', 'Help'].map((m) => <button key={m}>{m}</button>)}
    </nav>
    <div className="flex h-[26px] items-end border-b border-[#d9d9d9]">
      <button className="flex h-[22px] w-[77px] items-center gap-[3px] border-t border-r border-[#d9d9d9] pl-[3px]">
        Welcome
        <span className="flex h-[14px] w-[14px] items-center justify-center border border-[#bbb] bg-[#dcdcdc]"><FaPlus className="size-[10px] text-[#5cb84a]" /></span>
      </button>
      <button className="h-[22px] w-[62px] border-t border-[#d9d9d9] pr-[20px]">Help</button>
      <button className="-mb-px flex h-[26px] w-[105px] items-center gap-[4px] border-x border-t border-[#d9d9d9] bg-white pl-[13px]">
        <span className="flex h-[16px] w-[17px] items-center justify-center border border-[#bbb] bg-[#dcdcdc]"><Play /></span>
        Scope 1
        <span className="flex size-[13px] items-center justify-center rounded-sm bg-[#dd6a48] text-[11px] leading-none font-bold text-white">×</span>
      </button>
      <div className="flex flex-1 items-center justify-end gap-[2px] self-center">
        <WindowsIcon size="size-[20px]" d="M1 1h9v5H1zM3 5h9v5H3zM6 9h9v5H6z" />
        <WindowsIcon size="size-[20px]" d="M2 1h12v6H2zM2 9h12v6H2z" />
      </div>
    </div>
    <nav className="flex h-[20px] items-center gap-[15px] border-b border-[#e8e8e8] bg-white pr-[4px] pl-px leading-4">
      {['File', 'Control', 'View', 'Window'].map((m) => <button key={m}>{m}</button>)}
      <span className="flex-1" />
      <WindowsIcon size="h-[16px] w-[17px]" d="M1 2h9v7H1zM5 6h10v8H5z" />
    </nav>
    <div className="flex h-[28px] items-center border-b border-[#aaa] pr-[5px]">
      <button className="flex h-[21px] w-[92px] items-center gap-[4px] border border-[#adadad] bg-[#e1e1e1]">
        <svg viewBox="0 0 14 16" className="h-[15px] w-[14px]"><path d="M2 1l6 7-6 7zM12 1L7 5v6l5 4z" fill="#2b8a4e" stroke="#123f24" /></svg>
        Single
      </button>
      <button className="ml-[4px] flex h-[21px] w-[95px] items-center gap-[5px] border border-[#adadad] bg-[#e1e1e1] pl-[3px]"><Play />Run</button>
      <span className="w-[56px] pl-[5px]">Mode:</span>
      <GreyDrop label="Mode" value="Repeated" width="w-[119px]" />
      <span className="w-[2px]" />
      <GreyDrop label="Auto mode" value="Auto" width="w-[77px]" />
      <span className="w-[56px] pl-[5px]">Source:</span>
      <GreyDrop label="Source" value="Channel 1" width="w-[110px]" />
      <span className="w-[65px] pl-[4px]">Condition:</span>
      <GreyDrop
        label="Condition"
        value="Falling"
        width="w-[112px]"
        icon={
          <svg viewBox="0 0 16 16" className="absolute top-px left-[4px] h-[16px] w-[16px]">
            <path d="M1 1h7v14h7" fill="none" stroke="#333" strokeWidth="1.200" />
            <path d="M5.500 6h5L8 11z" fill="#d22" />
          </svg>
        }
      />
      <label className="flex items-center">
        <span className="w-[56px] pl-[4px]">Level:</span>
        <span className="relative">
          <select className="block h-[20px] w-[110px] appearance-none border border-[#7a7a7a] bg-white pl-[4px]"><option>500 mV</option></select>
          <Chevron />
        </span>
      </label>
      <div className="ml-[2px] flex h-[21px] flex-1 items-center justify-center border border-[#a3c7e6] bg-[#bedbf2]"><GreenArrow /></div>
    </div>

    <div className="flex">
      <div className="min-w-0 flex-1 bg-black text-[10px] text-white">
        <div className="flex h-[20px] items-center">
          <span className="w-[38px] text-[11px] text-[#2fb8a0]">2 V</span>
          <svg viewBox="0 0 10 14" className="mr-[5px] h-[13px] w-[10px]"><path d="M2 1l5 6-5 6" fill="none" stroke="#3b8cf0" strokeWidth="3" /></svg>
          <span className="h-[19px] w-[78px] border-2 border-[#d01818] text-center text-[11px] leading-[15px] font-bold">Done</span>
          <button className="h-[19px] w-[22px] border border-[#f4f47a] text-[11px] leading-4 text-[#ffff40]">C1</button>
          <button className="h-[19px] w-[22px] border border-[#9adcdc] text-[11px] leading-4 text-[#30e0f0]">C2</button>
          <span className="flex-1 pl-[3px] text-[11px]">{shot.info}</span>
          <div className="flex items-center gap-[5px]">
            <Magnifier />
            <svg viewBox="0 0 16 16" className="size-[15px]"><path d="M1 13h14" stroke="#999" strokeWidth="4" /><path d="M3 1l6 7M3 6V1h5" stroke="#3b8cf0" fill="none" strokeWidth="1.500" /></svg>
            <svg viewBox="0 0 16 16" className="size-[15px]"><path d="M1 13h14" stroke="#999" strokeWidth="4" /><path d="M3 1v9M3 5h10" stroke="#3b8cf0" fill="none" strokeWidth="1.500" /></svg>
            <svg viewBox="0 0 16 16" className="size-[18px] border border-[#5aa0dd] bg-[#cfe6f8]"><path d="M1 13h14" stroke="#aaa" strokeWidth="3" /><path d="M3 1v9M3 3h11M3 7h7" stroke="#3b7cc0" fill="none" strokeWidth="1.500" /></svg>
            <Magnifier />
            <span className="flex">
              <button aria-label="plot settings" className="ml-[2px] flex h-[18px] w-[20px] items-center justify-center bg-[#e1e1e1]"><FaCog className="size-[14px] text-[#7d868c]" /></button>
              <button className="ml-[2px] h-[18px] w-[18px] bg-[#e1e1e1] text-[11px] leading-[18px] font-bold text-black">Y</button>
            </span>
          </div>
        </div>
        <div className="relative">
          <svg viewBox="0 0 2452 593" className="isolate block w-full">
            <rect width="2452" height="593" fill="#000" />
            <Graticule />
            <g transform={shot.transform}>{shot.traces}</g>
            <path d={`M${shot.trigger - 6} 0h12l-4 8-2 4-2-4z`} fill="#fff" />
            <path d="M34 291v10l11-5z" fill="#ffff30" />
            <path d="M34 468v10l11-5z" fill="#20e8e8" />
            <path d="M2431 260v12l-12-6z" fill="#ffff30" />
            {shot.id !== 'two' && (
              <>
                <path d="M2450 90V280" stroke="#e0dc5a" strokeWidth="3" strokeDasharray="40 4 8 3 3 6" />
                <path d="M2450 267V470" stroke="#4fd8c8" strokeWidth="2" strokeDasharray="30 3 6 4" />
              </>
            )}
            {shot.id === 'two' && (
              <>
                <path d="M2450 205V300" stroke="#e0dc5a" strokeWidth="3" strokeDasharray="10 6 30 8" />
                <path d="M2432 488h20" stroke={CYAN} strokeWidth="2" />
              </>
            )}
            {[6, 63, 123, 182, 241, 300, 359, 418, 478, 537].map((y) => (
              <path key={y} d={`M0 ${y}h3v3h-3`} stroke="#2fb8a0" fill="none" strokeWidth="1.500" />
            ))}
          </svg>
          {shot.cursor}
        </div>
        <div className="relative h-[19px] overflow-hidden">
          <button aria-label="reset view" className="absolute bottom-[3px] left-0 z-10 h-[13px] w-[21px] bg-white">
            <svg viewBox="0 0 21 13" className="h-[13px] w-[21px]"><path d="M7 3v7L2 6.500zM11 3l6 7M17 3l-6 7" fill="#222" stroke="#222" /></svg>
          </button>
          <div className="-ml-[3.4%] grid w-[107.5%] grid-cols-11 text-center leading-[20px] whitespace-nowrap">
            {Array.from({ length: 11 }).map((_, i) => (
              <span key={i} className="first:pl-[26px]">{(shot.firstTime + i * 50).toFixed(shot.decimals)} us</span>
            ))}
          </div>
        </div>
      </div>
      <aside className="flex w-[184px] gap-[3px] border-b border-[#aaa] pr-[5px] pl-[3px]">
        <div className="w-[155px]">
          <svg viewBox="0 0 14 18" className="h-[19px] w-[14px]"><path d="M1 8h7V5l5 5-5 5v-3H1z" fill="#5fae5c" /></svg>
          <Group title="Time" frame="border-white">
            <Field label="Position:" value={shot.position} />
            <Field label="Base:" value="50 us/div" />
            <div className="flex h-[21px] items-center justify-center border border-[#9cc4e4] bg-[#bedbf2]"><GreenArrow /></div>
          </Group>
          <button className="relative flex h-[28px] w-full items-center gap-[4px] pl-[4px]"><FaCog className="size-[14px] text-[#7d868c]" />Options<Caret /></button>
          <button className="relative mb-[2px] flex h-[22px] w-full items-center gap-[4px] border border-[#adadad] bg-[#e1e1e1] pl-[3px]"><FaPlus className="size-[14px] text-[#48a83c]" />Add Channel<Caret /></button>
          <Group title="Channel 1" frame="mb-[2px] border-[#f8f820]">
            <Field label="Offset:" value="0 V" />
            <Field label="Range:" value="1 V/div" />
          </Group>
          <Group title="Channel 2" frame="border-[#18f0f0]">
            <Field label="Offset:" value="-3 V" focus={shot.focus} />
            <Field label="Range:" value="1 V/div" />
          </Group>
        </div>
        <div className="flex flex-1 flex-col items-center justify-between border-l border-white pt-[22px] pb-[5px]">
          <svg viewBox="0 0 9 6" className="h-[6px] w-[9px]"><path d="M1 5l3.500-3.500L8 5" fill="none" stroke="#aaa" strokeWidth="1.500" /></svg>
          <svg viewBox="0 0 9 6" className="h-[6px] w-[9px]"><path d="M1 1l3.500 3.500L8 1" fill="none" stroke="#aaa" strokeWidth="1.500" /></svg>
        </div>
      </aside>
    </div>

    <footer className="flex h-[27px] items-center border-t-2 border-white pt-[3px] pr-[4px] text-[10px] whitespace-nowrap">
      <button className="h-[18px] w-[74px] border border-[#adadad] bg-[#e1e1e1] pr-[3px] leading-4">Manual Trigger</button>
      <span className="flex-1" />
      <span className="mr-[8px] h-[18px] w-[153px] border border-[#adadad] bg-[#e1e1e1] text-center leading-4">Discovery2 SN:210321AA2270</span>
      <button aria-label="erase" className="mr-[8px] flex h-[18px] w-[21px] items-center justify-center border border-[#b5b5b5] bg-[#dedede]">
        <svg viewBox="0 0 16 10" className="h-[10px] w-[15px]"><path d="M5 1h10l-4 7H1z" fill="#b0b0b0" stroke="#888" /></svg>
      </button>
      <span className="mr-[8px] h-[18px] w-[76px] border border-[#adadad] bg-[#e1e1e1] text-center text-[11px] leading-4">Status: OK</span>
      <button aria-label="device settings" className="mr-[8px] flex h-[18px] w-[21px] items-center justify-center border border-[#b5b5b5] bg-[#dedede]"><FaCog className="size-[12px] text-[#7d868c]" /></button>
      <svg viewBox="0 0 9 9" className="mt-[6px] size-[9px]"><path d="M7 1h2M4 4h2M7 4h2M1 7h2M4 7h2M7 7h2" stroke="#bbb" strokeWidth="2" /></svg>
    </footer>
  </div>
);

const App: React.FC = () => (
  <main className="min-h-screen overflow-hidden bg-white">
    <section className="overflow-hidden">
      <div className="-mt-[4px] w-[78.2%]"><LogicWindow cap={captures[0]} /></div>
    </section>
    <section className="mt-[5px] overflow-hidden">
      <div className="w-[99.8%]"><ScopeWindow shot={shots[0]} /></div>
    </section>
    {/* slice of the desktop between two windows */}
    <div className="relative -mt-[2px] flex h-[2px] w-[78%] bg-white">
      <i className="ml-[76%] w-[92px] bg-black" />
      <i className="ml-[16px] w-[69px] bg-[#0a4a90]" />
      <i className="ml-[77px] w-[14px] bg-[#777]" />
    </div>
    <section className="overflow-hidden">
      <div className="-ml-[10px] w-[78.2%]"><LogicWindow cap={captures[1]} /></div>
    </section>
    <section className="mt-[11px] overflow-hidden">
      <div className="-ml-[43px] w-[99.9%] border-r-2 border-b border-[#222]"><ScopeWindow shot={shots[1]} /></div>
    </section>
    <section className="relative -mt-[7px] overflow-hidden">
      <div className="-mt-px -ml-[24px] w-[78.2%]"><LogicWindow cap={captures[2]} /></div>
    </section>
    <div className="mt-[9px] h-[2px] w-[65%] bg-[#4a4494]" />
    <section className="mt-px mb-[13px] h-[762px] overflow-hidden">
      <div className="-ml-[29px] w-[99.8%]"><ScopeWindow shot={shots[2]} /></div>
    </section>
  </main>
);

export default App;
